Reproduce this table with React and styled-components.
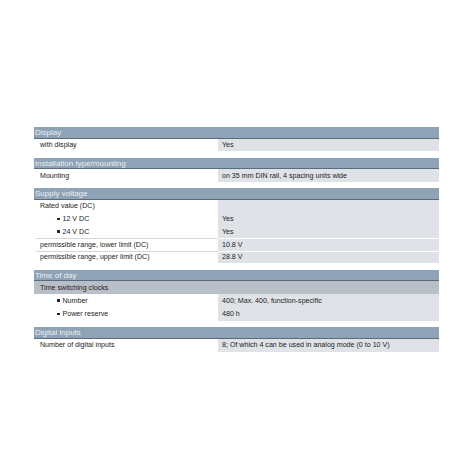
import React from 'react';
import styled, { createGlobalStyle } from 'styled-components';

const GlobalStyle = createGlobalStyle`
  html, body {
    margin: 0;
    padding: 0;
    background: #ffffff;
  }
  body {
    font-family: 'Liberation Sans', Arial, sans-serif;
  }
`;

const sections = [
  {
    title: 'Display',
    rows: [{ label: 'with display', value: 'Yes' }],
  },
  {
    title: 'Installation type/mounting',
    rows: [{ label: 'Mounting', value: 'on 35 mm DIN rail, 4 spacing units wide' }],
  },
  {
    title: 'Supply voltage',
    rows: [
      { label: 'Rated value (DC)', value: '' },
      { label: '12 V DC', value: 'Yes', bullet: true },
      { label: '24 V DC', value: 'Yes', bullet: true },
      { label: 'permissible range, lower limit (DC)', value: '10.8 V', divider: true },
      { label: 'permissible range, upper limit (DC)', value: '28.8 V', divider: true },
    ],
  },
  {
    title: 'Time of day',
    rows: [
      { label: 'Time switching clocks', sub: true },
      { label: 'Number', value: '400; Max. 400, function-specific', bullet: true, tall: true },
      { label: 'Power reserve', value: '480 h', bullet: true, tall: true },
    ],
  },
  {
    title: 'Digital inputs',
    rows: [{ label: 'Number of digital inputs', value: '8; Of which 4 can be used in analog mode (0 to 10 V)' }],
  },
];

const App = () => {
  return (
    <>
      <GlobalStyle />
      <Page>
        <Sheet>
          {sections.map((section) => (
            <Section key={section.title}>
              <SectionHeader>{section.title}</SectionHeader>
              {section.rows.map((row) =>
                row.sub ? (
                  <SubRow key={row.label}>{row.label}</SubRow>
                ) : (
                  <Row key={row.label} $divider={row.divider} $tall={row.tall}>
                    <Label $bullet={row.bullet}>
                      {row.bullet && <Bullet />}
                      {row.label}
                    </Label>
                    <Value>{row.value}</Value>
                  </Row>
                )
              )}
            </Section>
          ))}
        </Sheet>
      </Page>
    </>
  );
};

export default App;

const Page = styled.div`
  width: 474px;
  height: 474px;
  padding: 127px 0 0 34px;
  box-sizing: border-box;
  background: #ffffff;
`;

const Sheet = styled.div`
  display: flex;
  flex-direction: column;
  gap: 6.5px;
  width: 405px;
`;

const Section = styled.div`
  display: flex;
  flex-direction: column;
`;

const SectionHeader = styled.div`
  height: 10.5px;
  line-height: 11px;
  padding-left: 1px;
  background: #8ea3b5;
  border-bottom: 1.5px solid #5a6b7b;
  color: #eaeff4;
  font-size: 8px;
  white-space: nowrap;
  overflow: hidden;
`;

const Row = styled.div`
  display: grid;
  grid-template-columns: 184px 1fr;
  height: ${({ $tall }) => ($tall ? '13.5px' : '12.7px')};
  font-size: 7.1px;
  color: #222222;
  border-top: ${({ $divider }) => ($divider ? '1px solid #ffffff' : 'none')};
  box-sizing: border-box;
  position: relative;

  &::before {
    content: '';
    display: ${({ $divider }) => ($divider ? 'block' : 'none')};
    position: absolute;
    top: -1px;
    left: 2px;
    width: 182px;
    height: 1px;
    background: #d6d6d6;
  }
`;

const Label = styled.div`
  display: flex;
  align-items: center;
  gap: 2px;
  padding-left: ${({ $bullet }) => ($bullet ? '23px' : '6px')};
  white-space: nowrap;
  background: #ffffff;
`;

const Bullet = styled.span`
  width: 2.5px;
  height: 2.5px;
  background: #262626;
  margin-right: 1px;
`;

const Value = styled.div`
  display: flex;
  align-items: center;
  padding-left: 4px;
  background: #dfe2e6;
  white-space: nowrap;
`;

const SubRow = styled.div`
  display: flex;
  align-items: center;
  height: 12.5px;
  padding-left: 6px;
  background: #b9bfc7;
  color: #222222;
  font-size: 7.1px;
`;
